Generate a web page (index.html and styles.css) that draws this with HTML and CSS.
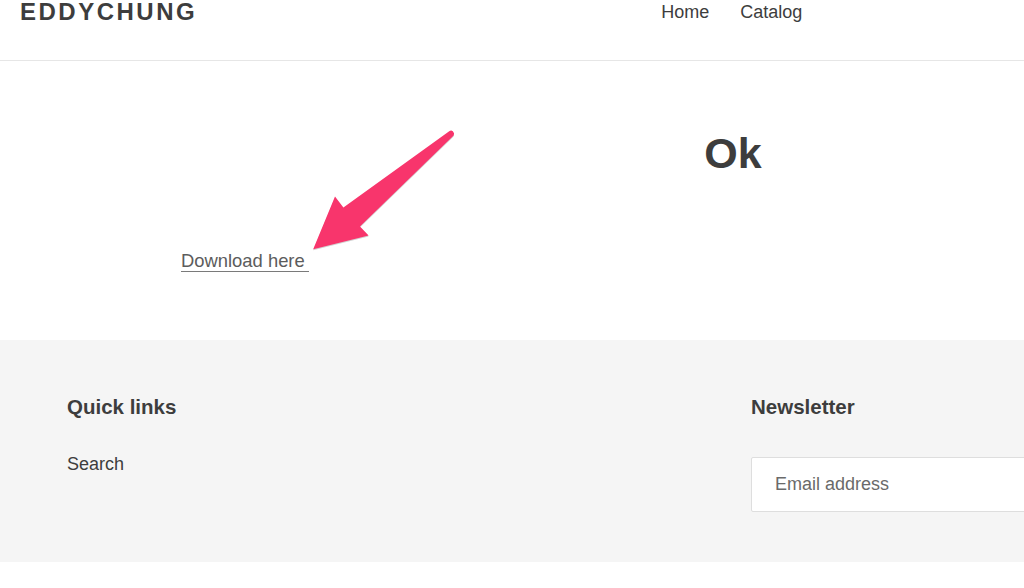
FILE: index.html
```html
<!DOCTYPE html>
<html lang="en">
<head>
<meta charset="utf-8">
<title>EDDYCHUNG</title>
<link rel="stylesheet" href="styles.css">
</head>
<body>
<header class="site-header">
  <a class="logo" href="#">EDDYCHUNG</a>
  <nav class="main-nav">
    <a href="#">Home</a>
    <a href="#">Catalog</a>
  </nav>
</header>
<main class="page">
  <div class="col-left">
    <a class="download" href="#">Download here</a>
  </div>
  <div class="col-right">
    <h1 class="title">Ok</h1>
  </div>
  <svg class="arrow" width="165" height="130" viewBox="0 0 165 130" aria-hidden="true">
    <path d="M148.5 6.8 Q152.5 3.8 154 8.2 Q154.2 10.4 152.4 11.8 L60 101.6 L68.6 110.6 L13.2 124.2 L35 71.6 L43.4 82.6 Z" fill="#f8356c"/>
  </svg>
</main>
<footer class="site-footer">
  <div class="footer-col links-col">
    <h2 class="footer-title">Quick links</h2>
    <ul class="footer-links">
      <li><a href="#">Search</a></li>
    </ul>
  </div>
  <div class="footer-col news-col">
    <h2 class="footer-title">Newsletter</h2>
    <input class="email" type="email" placeholder="Email address">
  </div>
</footer>
</body>
</html>
```

FILE: styles.css
```css
html, body {
  margin: 0;
  padding: 0;
  background: #fff;
  overflow-x: hidden;
}
body {
  font-family: "Liberation Sans", Arial, Helvetica, sans-serif;
  color: #3d3d3d;
  font-size: 18px;
}
a {
  color: inherit;
  text-decoration: none;
}
.site-header {
  display: flex;
  align-items: flex-start;
  height: 60px;
  padding: 0 20px;
  border-bottom: 1px solid #e6e6e6;
}
.logo {
  font-size: 24px;
  line-height: 24px;
  font-weight: 700;
  letter-spacing: 2.5px;
  color: #3d3d3d;
}
.main-nav {
  display: flex;
  gap: 31px;
  margin-left: 464px;
  font-size: 18px;
  line-height: 24px;
}
.page {
  position: relative;
  display: flex;
  align-items: flex-start;
  height: 279px;
}
.col-left {
  width: 261px;
  padding: 186px 0 0 181px;
}
.download {
  display: inline;
  font-size: 18.4px;
  line-height: 27px;
  color: #5c5c5c;
  border-bottom: 1px solid #7a7a7a;
  padding-right: 4px;
}
.col-right {
  flex: 1;
  text-align: center;
  padding-top: 67px;
}
.title {
  margin: 0;
  font-size: 43px;
  line-height: 1.2;
  font-weight: 700;
  color: #3d3d3d;
}
.arrow {
  position: absolute;
  left: 300px;
  top: 64px;
  filter: drop-shadow(0 1px 0.6px rgba(0, 0, 0, 0.18));
}
.site-footer {
  display: flex;
  align-items: flex-start;
  background: #f5f5f5;
  padding: 55px 0 50px 67px;
  overflow: hidden;
}
.footer-col {
  display: flex;
  flex-direction: column;
  align-items: flex-start;
}
.links-col {
  width: 684px;
  flex: none;
}
.news-col {
  flex: none;
}
.footer-title {
  margin: 0;
  font-size: 20.5px;
  line-height: 1.2;
  font-weight: 700;
  color: #3d3d3d;
}
.footer-links {
  list-style: none;
  margin: 31px 0 0;
  padding: 0;
  font-size: 18px;
  line-height: 27px;
}
.email {
  margin-top: 37px;
  box-sizing: border-box;
  width: 340px;
  height: 55px;
  border: 1px solid #dedede;
  border-radius: 2px;
  background: #fff;
  padding: 0 0 0 23px;
  font-family: "Liberation Sans", Arial, Helvetica, sans-serif;
  font-size: 18px;
  color: #3d3d3d;
  outline: none;
}
.email::placeholder {
  color: #6a6a6a;
  opacity: 1;
}
```
